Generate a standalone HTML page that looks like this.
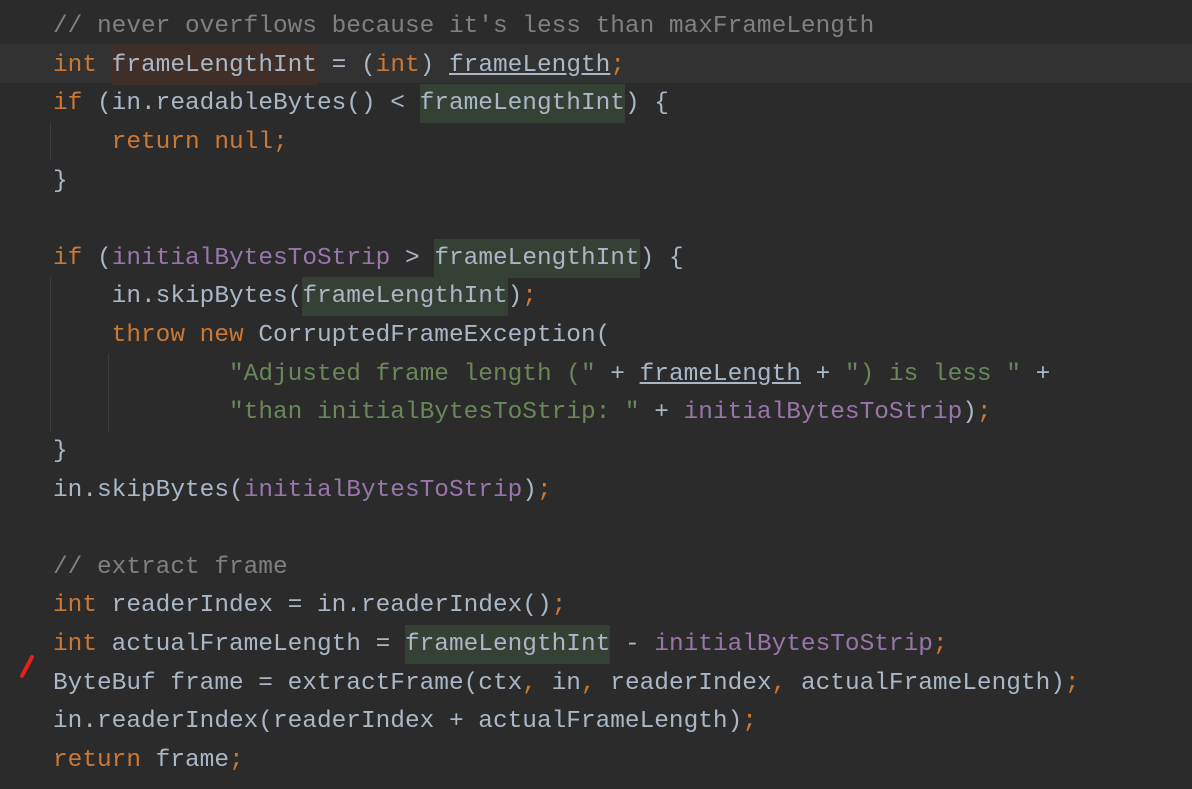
<!DOCTYPE html>
<html><head><style>
html,body{margin:0;padding:0;background:#2b2b2b;width:1192px;height:789px;overflow:hidden}
.c{position:absolute;left:53px;top:8px;font-family:"Liberation Mono","DejaVu Sans Mono",monospace;font-size:24.45px;color:#a9b7c6}
.l{height:38.63px;line-height:38.63px;white-space:pre}
.k{color:#cc7832}.m{color:#808080}.s{color:#6a8759}.p{color:#9876aa}
.g{background:#344134;padding:6px 0}.o{background:#3f2f28;padding:6px 0}.u{text-decoration:underline;text-decoration-color:#a9b7c6}
.hl{position:absolute;left:0;top:44px;width:1192px;height:39px;background:#323232}
.gd{position:absolute;width:1px;background:#3c3c3c}
</style></head><body>
<div class="hl"></div>
<div class="gd" style="left:50px;top:122px;height:38px"></div>
<div class="gd" style="left:50px;top:277px;height:155px"></div>
<div class="gd" style="left:108px;top:354px;height:78px"></div>
<svg style="position:absolute;left:14px;top:652px" width="24" height="30"><path d="M18 5 L8 24" stroke="#e8201a" stroke-width="4" stroke-linecap="round"/></svg>
<div class="c"><div class="l m">// never overflows because it's less than maxFrameLength</div><div class="l"><span class="k">int</span> <span class="o">frameLengthInt</span> = (<span class="k">int</span>) <span class="u">frameLength</span><span class="k">;</span></div><div class="l"><span class="k">if</span> (in.readableBytes() &lt; <span class="g">frameLengthInt</span>) {</div><div class="l">    <span class="k">return null;</span></div><div class="l">}</div><div class="l"> </div><div class="l"><span class="k">if</span> (<span class="p">initialBytesToStrip</span> &gt; <span class="g">frameLengthInt</span>) {</div><div class="l">    in.skipBytes(<span class="g">frameLengthInt</span>)<span class="k">;</span></div><div class="l">    <span class="k">throw new</span> CorruptedFrameException(</div><div class="l">            <span class="s">"Adjusted frame length ("</span> + <span class="u">frameLength</span> + <span class="s">") is less "</span> +</div><div class="l">            <span class="s">"than initialBytesToStrip: "</span> + <span class="p">initialBytesToStrip</span>)<span class="k">;</span></div><div class="l">}</div><div class="l">in.skipBytes(<span class="p">initialBytesToStrip</span>)<span class="k">;</span></div><div class="l"> </div><div class="l m">// extract frame</div><div class="l"><span class="k">int</span> readerIndex = in.readerIndex()<span class="k">;</span></div><div class="l"><span class="k">int</span> actualFrameLength = <span class="g">frameLengthInt</span> - <span class="p">initialBytesToStrip</span><span class="k">;</span></div><div class="l">ByteBuf frame = extractFrame(ctx<span class="k">,</span> in<span class="k">,</span> readerIndex<span class="k">,</span> actualFrameLength)<span class="k">;</span></div><div class="l">in.readerIndex(readerIndex + actualFrameLength)<span class="k">;</span></div><div class="l"><span class="k">return</span> frame<span class="k">;</span></div></div>
</body></html>
